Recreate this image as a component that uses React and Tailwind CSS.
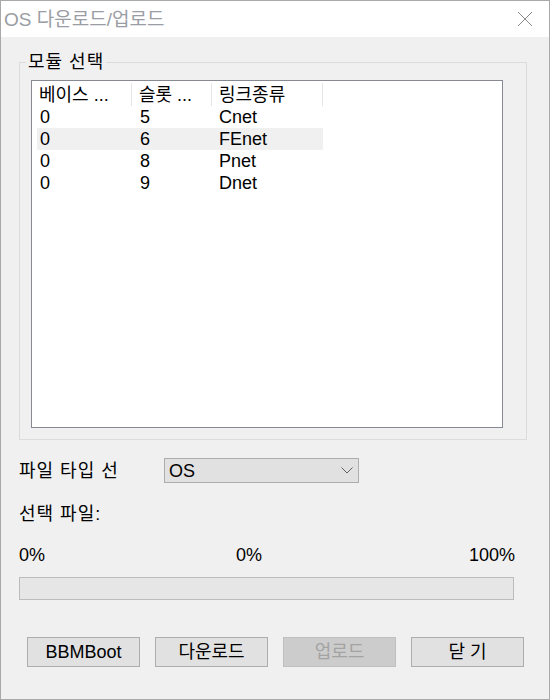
import { useState } from "react";

const rows = [
  { base: "0", slot: "5", link: "Cnet" },
  { base: "0", slot: "6", link: "FEnet" },
  { base: "0", slot: "8", link: "Pnet" },
  { base: "0", slot: "9", link: "Dnet" },
];

const columns = [
  { label: "베이스 ...", width: "w-[100px]" },
  { label: "슬롯 ...", width: "w-[80px]" },
  { label: "링크종류", width: "w-[111px]" },
];

function CloseIcon() {
  return (
    <svg width="16" height="16" viewBox="0 0 16 16" fill="none">
      <path d="M1 1 L15 15 M15 1 L1 15" stroke="#8a8a8a" strokeWidth="1" />
    </svg>
  );
}

function Chevron() {
  return (
    <svg width="12" height="7" viewBox="0 0 12 7" fill="none">
      <polyline points="0.5,0.5 6,6 11.5,0.5" stroke="#606060" strokeWidth="1" />
    </svg>
  );
}

function Button({ children, disabled }) {
  return (
    <button
      disabled={disabled}
      className={
        disabled
          ? "w-[113px] h-[30px] border border-[#bfbfbf] bg-[#cccccc] text-[#a3a3a3] leading-none"
          : "w-[113px] h-[30px] border border-[#adadad] bg-[#e1e1e1] text-black leading-none"
      }
    >
      {children}
    </button>
  );
}

export default function App() {
  const [selected] = useState(1);

  return (
    <div className="w-[550px] h-[700px] border border-[#a9a9a9] bg-[#f0f0f0] flex flex-col text-[18px] text-black font-['Liberation_Sans','Noto_Sans_CJK_KR',sans-serif]">
      {/* 타이틀 바 */}
      <div className="h-[36px] bg-white flex items-center justify-between pl-[3px] pr-[16px]">
        <span className="text-[19px] text-[#9a9da3] leading-none">OS 다운로드/업로드</span>
        <CloseIcon />
      </div>

      <div className="flex flex-col pl-[18px]">
        {/* 모듈 선택 그룹 */}
        <div className="relative mt-[25px] w-[508px] h-[378px] border border-[#dcdcdc] pt-[17px] pl-[11px]">
          <span className="absolute left-[6px] top-[-12px] px-[2px] bg-[#f0f0f0] leading-[22px] tracking-[1px]">
            모듈 선택
          </span>

          <div className="w-[472px] h-[348px] border border-[#878a92] bg-white">
            <div className="flex h-[25px]">
              {columns.map((c) => (
                <div key={c.label} className={`${c.width} flex items-center pl-[7px] border-r border-[#e5e5e5] mt-[2px] leading-[22px] whitespace-nowrap`}>
                  {c.label}
                </div>
              ))}
            </div>
            {rows.map((r, i) => (
              <div
                key={r.link}
                className={
                  i === selected
                    ? "flex h-[22px] leading-[22px] ml-[5px] w-[286px] bg-[#f0f0f0]"
                    : "flex h-[22px] leading-[22px] ml-[5px] w-[286px]"
                }
              >
                <div className="w-[95px] pl-[3px]">{r.base}</div>
                <div className="w-[80px] pl-[8px]">{r.slot}</div>
                <div className="w-[111px] pl-[7px]">{r.link}</div>
              </div>
            ))}
          </div>
        </div>

        {/* 파일 타입 */}
        <div className="flex items-center mt-[18px]">
          <span className="w-[145px] leading-[22px] tracking-[1px]">파일 타입 선</span>
          <div className="w-[195px] h-[25px] border border-[#adadad] bg-[#e1e1e1] flex items-center justify-between pl-[4px] pr-[5px]">
            <span className="leading-none">OS</span>
            <Chevron />
          </div>
        </div>

        <div className="mt-[21px] leading-[20px] tracking-[1px]">선택 파일:</div>

        {/* 진행률 */}
        <div className="flex w-[496px] mt-[21px] leading-[20px]">
          <span className="w-[217px]">0%</span>
          <span>0%</span>
          <span className="flex-1 text-right">100%</span>
        </div>
        <div className="mt-[12px] w-[495px] h-[23px] border border-[#bcbcbc] bg-[#e6e6e6]" />

        {/* 버튼 */}
        <div className="flex gap-[15px] mt-[37px] ml-[8px]">
          <Button>BBMBoot</Button>
          <Button>다운로드</Button>
          <Button disabled>업로드</Button>
          <Button>닫 기</Button>
        </div>
      </div>
    </div>
  );
}
